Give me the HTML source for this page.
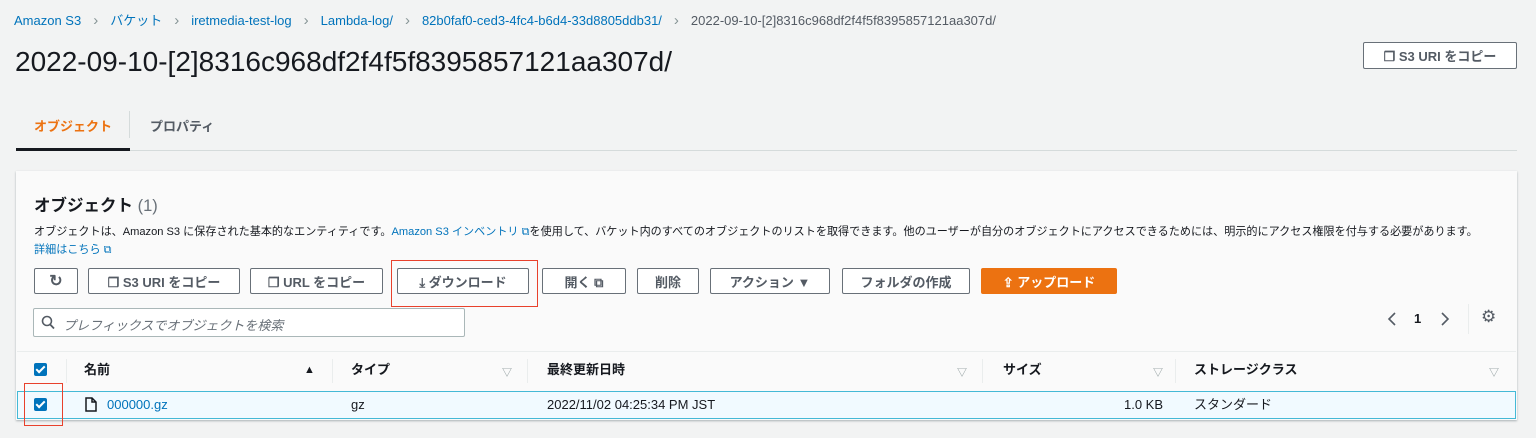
<!DOCTYPE html>
<html><head><meta charset="utf-8"><style>
*{box-sizing:border-box;margin:0;padding:0}
body{width:1536px;height:438px;background:#f2f3f3;font-family:"Liberation Sans","Noto Sans CJK JP",sans-serif;color:#16191f;position:relative;overflow:hidden;font-size:13px}
.a{position:absolute;white-space:nowrap}
.lnk{color:#0073bb}
.sep{color:#879596;margin:0 12px;font-size:15px}
.btn{position:absolute;top:268px;height:26px;border:1px solid #687078;border-radius:2px;background:#fff;font-weight:bold;font-size:13px;color:#545b64;display:flex;align-items:center;justify-content:center;gap:8px}
.hd{position:absolute;top:362px;font-weight:bold;font-size:13px;color:#16191f;line-height:16px}
.tri{position:absolute;top:364px;color:#879596;font-size:10px}
.dv{position:absolute;top:359px;width:1px;height:24px;background:#eaeded}
.cb{position:absolute;width:13px;height:13px;background:#0073bb;border-radius:2px}
.cb:after{content:"";position:absolute;left:4px;top:1px;width:3px;height:7px;border:solid #fff;border-width:0 2px 2px 0;transform:rotate(45deg)}
.rt{position:absolute;top:397px;font-size:13px;line-height:16px}
</style></head><body>
<div class="a" style="left:14px;top:10px;font-size:13px"><span class="lnk">Amazon S3</span><span class="sep">&#x203A;</span><span class="lnk">バケット</span><span class="sep">&#x203A;</span><span class="lnk">iretmedia-test-log</span><span class="sep">&#x203A;</span><span class="lnk">Lambda-log/</span><span class="sep">&#x203A;</span><span class="lnk">82b0faf0-ced3-4fc4-b6d4-33d8805ddb31/</span><span class="sep">&#x203A;</span><span style="color:#545b64">2022-09-10-[2]8316c968df2f4f5f8395857121aa307d/</span></div>
<div class="a" style="left:15px;top:46px;font-size:28px;color:#16191f">2022-09-10-[2]8316c968df2f4f5f8395857121aa307d/</div>
<div class="btn" style="left:1363px;top:42px;width:154px;height:27px">❐ S3 URI をコピー</div>
<div class="a" style="left:34px;top:116px;font-weight:bold;color:#ec7211;font-size:13px">オブジェクト</div>
<div class="a" style="left:129px;top:111px;width:1px;height:27px;background:#d5dbdb"></div>
<div class="a" style="left:150px;top:116px;font-weight:bold;color:#545b64;font-size:13px">プロパティ</div>
<div class="a" style="left:16px;top:150px;width:1501px;height:1px;background:#d5dbdb"></div>
<div class="a" style="left:16px;top:148px;width:114px;height:3px;background:#16191f"></div>
<div class="a" style="left:16px;top:171px;width:1501px;height:249px;background:#fafafa;box-shadow:0 1px 2px rgba(0,28,36,.3)"></div>
<div class="a" style="left:34px;top:192px;font-size:16.5px;font-weight:bold">オブジェクト <span style="font-weight:normal;color:#687078">(1)</span></div>
<div class="a" style="left:34px;top:223px;font-size:11.1px;color:#16191f">オブジェクトは、Amazon S3 に保存された基本的なエンティティです。<span class="lnk">Amazon S3 インベントリ ⧉</span>を使用して、バケット内のすべてのオブジェクトのリストを取得できます。他のユーザーが自分のオブジェクトにアクセスできるためには、明示的にアクセス権限を付与する必要があります。</div>
<div class="a lnk" style="left:34px;top:241px;font-size:11.1px">詳細はこちら ⧉</div>
<div class="btn" style="left:34px;width:44px;font-size:16px">↻</div>
<div class="btn" style="left:88px;width:152px">❐ S3 URI をコピー</div>
<div class="btn" style="left:250px;width:133px">❐ URL をコピー</div>
<div class="btn" style="left:397px;width:132px">⤓ ダウンロード</div>
<div class="btn" style="left:542px;width:84px">開く ⧉</div>
<div class="btn" style="left:637px;width:62px">削除</div>
<div class="btn" style="left:710px;width:120px">アクション ▼</div>
<div class="btn" style="left:842px;width:128px">フォルダの作成</div>
<div class="btn" style="left:981px;width:136px;background:#ec7211;border-color:#ec7211;color:#fff">⇪ アップロード</div>
<div class="a" style="left:391px;top:260px;width:147px;height:47px;border:1.5px solid #e8412c"></div>
<div class="a" style="left:33px;top:308px;width:432px;height:29px;border:1px solid #aab7b8;border-radius:2px;background:#fff"></div>
<svg class="a" style="left:41px;top:315px" width="14" height="15" viewBox="0 0 14 15"><circle cx="6" cy="6" r="4.5" fill="none" stroke="#545b64" stroke-width="1.6"/><path d="M9.2 9.5L13 13.5" stroke="#545b64" stroke-width="1.8"/></svg>
<div class="a" style="left:63px;top:315px;font-size:13px;color:#687078;font-style:italic">プレフィックスでオブジェクトを検索</div>
<svg class="a" style="left:1386px;top:311px" width="70" height="16" viewBox="0 0 70 16"><path d="M9 2L3 8l6 6" fill="none" stroke="#545b64" stroke-width="1.6"/><path d="M56 2l6 6-6 6" fill="none" stroke="#545b64" stroke-width="1.6"/></svg>
<div class="a" style="left:1414px;top:311px;font-size:13px;font-weight:bold">1</div>
<div class="a" style="left:1468px;top:304px;width:1px;height:30px;background:#eaeded"></div>
<div class="a" style="left:1481px;top:307px;font-size:17px;color:#545b64">⚙</div>
<div class="a" style="left:17px;top:351px;width:1499px;height:1px;background:#eaeded"></div>
<div class="cb" style="left:34px;top:363px"></div>
<div class="dv" style="left:66px"></div>
<div class="hd" style="left:84px">名前</div><div class="a" style="left:304px;top:364px;font-size:11px">▲</div>
<div class="dv" style="left:332px"></div>
<div class="hd" style="left:351px">タイプ</div><div class="tri" style="left:502px">▽</div>
<div class="dv" style="left:527px"></div>
<div class="hd" style="left:547px">最終更新日時</div><div class="tri" style="left:957px">▽</div>
<div class="dv" style="left:982px"></div>
<div class="hd" style="left:1003px">サイズ</div><div class="tri" style="left:1153px">▽</div>
<div class="dv" style="left:1175px"></div>
<div class="hd" style="left:1194px">ストレージクラス</div><div class="tri" style="left:1489px">▽</div>
<div class="a" style="left:17px;top:391px;width:1499px;height:28px;background:#f1faff;border:1px solid #44b9d6"></div>
<div class="cb" style="left:34px;top:398px"></div>
<svg class="a" style="left:85px;top:397px" width="12" height="15" viewBox="0 0 12 15"><path d="M1 1h6l4 4v9H1z M7 1v4h4" fill="none" stroke="#16191f" stroke-width="1.5"/></svg>
<div class="rt lnk" style="left:107px">000000.gz</div>
<div class="rt" style="left:351px">gz</div>
<div class="rt" style="left:547px">2022/11/02 04:25:34 PM JST</div>
<div class="rt" style="left:1124px">1.0 KB</div>
<div class="rt" style="left:1194px">スタンダード</div>
<div class="a" style="left:24px;top:383px;width:39px;height:43px;border:1.5px solid #e8412c"></div>
</body></html>
